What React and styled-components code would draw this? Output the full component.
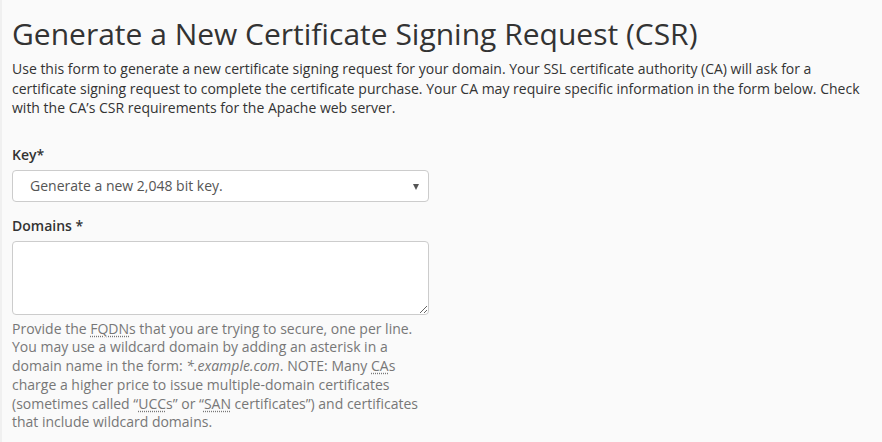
import React from "react";
import styled, { createGlobalStyle } from "styled-components";

const GlobalStyle = createGlobalStyle`
  html, body {
    margin: 0;
    padding: 0;
    background: #fafafa;
    font-family: "Open Sans", "Liberation Sans", sans-serif;
    color: #333;
  }
`;

const Page = styled.div`
  padding: 14px 0 0 10px;
  border-left: 2px solid #f0f0f0;
  min-height: 442px;
  box-sizing: border-box;
`;

const Title = styled.h1`
  margin: 0 0 5px 0;
  font-size: 30px;
  font-weight: 400;
  line-height: 40px;
  color: #333;
`;

const Intro = styled.p`
  max-width: 856px;
  margin: 0 0 27px 0;
  font-size: 14px;
  line-height: 19.5px;
  color: #333;
`;

const Field = styled.div`
  width: 417px;
  margin-bottom: 14px;
`;

const Label = styled.label`
  display: block;
  font-size: 14px;
  font-weight: 600;
  line-height: 20px;
  margin-bottom: 5px;
  color: #333;
`;

const SelectWrap = styled.div`
  position: relative;
  &::after {
    content: "";
    position: absolute;
    right: 10px;
    top: 14px;
    border-left: 3.5px solid transparent;
    border-right: 3.5px solid transparent;
    border-top: 6px solid #555;
    pointer-events: none;
  }
`;

const Select = styled.select`
  appearance: none;
  width: 100%;
  height: 32px;
  box-sizing: border-box;
  padding: 0 30px 0 17px;
  border: 1px solid #ccc;
  border-radius: 4px;
  background: #fff;
  font-family: inherit;
  font-size: 14px;
  color: #555;
  outline: none;
`;

const TextArea = styled.textarea`
  display: block;
  width: 100%;
  height: 74px;
  box-sizing: border-box;
  border: 1px solid #ccc;
  border-radius: 4px;
  background: #fff;
  font-family: inherit;
  font-size: 14px;
  outline: none;
  resize: vertical;
`;

const Help = styled.p`
  margin: 5px 0 0 0;
  font-size: 14px;
  line-height: 18.8px;
  color: #777;
`;

const Abbr = styled.abbr`
  text-decoration: underline dotted;
  text-underline-offset: 2px;
  cursor: help;
`;

export default function App() {
  return (
    <>
      <GlobalStyle />
      <Page>
        <Title>Generate a New Certificate Signing Request (CSR)</Title>
        <Intro>
          Use this form to generate a new certificate signing request for your
          domain. Your SSL certificate authority (CA) will ask for a
          certificate signing request to complete the certificate purchase.
          Your CA may require specific information in the form below. Check
          with the CA’s CSR requirements for the Apache web server.
        </Intro>
        <Field>
          <Label htmlFor="key">Key*</Label>
          <SelectWrap>
            <Select id="key" defaultValue="2048">
              <option value="2048">Generate a new 2,048 bit key.</option>
            </Select>
          </SelectWrap>
        </Field>
        <Field>
          <Label htmlFor="domains">Domains *</Label>
          <TextArea id="domains" />
          <Help>
            Provide the <Abbr title="Fully Qualified Domain Name">FQDN</Abbr>s
            that you are trying to secure, one per line. You may use a wildcard
            domain by adding an asterisk in a domain name in the form:{" "}
            <em>*.example.com</em>. NOTE: Many{" "}
            <Abbr title="Certificate Authority">CA</Abbr>s charge a higher
            price to issue multiple-domain certificates (sometimes called “
            <Abbr title="Unified Communications Certificate">UCC</Abbr>s” or “
            <Abbr title="Subject Alternative Name">SAN</Abbr> certificates”)
            and certificates that include wildcard domains.
          </Help>
        </Field>
      </Page>
    </>
  );
}
